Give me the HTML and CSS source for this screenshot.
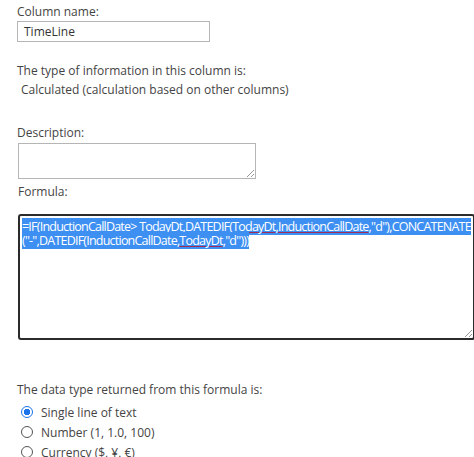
FILE: index.html
```html
<!DOCTYPE html>
<html lang="en">
<head>
  <meta charset="UTF-8">
  <title>Edit Column</title>
  <link rel="stylesheet" href="styles.css">
</head>
<body>
  <div class="form">
    <div class="label">Column name:</div>
    <div class="input">TimeLine</div>

    <div class="label type-label">The type of information in this column is:</div>
    <div class="value">Calculated (calculation based on other columns)</div>

    <div class="label desc-label">Description:</div>
    <div class="desc-box"><span class="grip"></span></div>

    <div class="label formula-label">Formula:</div>
    <div class="formula-box">
      <div class="formula-text"><span class="sel">=IF(<u>InductionCallDate</u>&gt; <u>TodayDt</u>,DATEDIF(<u>TodayDt</u>,<u>InductionCallDate</u>,"d"),CONCATENATE</span><br><span class="sel">("-",DATEDIF(InductionCallDate,<u>TodayDt</u>,"d")))</span></div>
      <span class="grip"></span>
    </div>

    <div class="label return-label">The data type returned from this formula is:</div>
    <div class="radio-list">
      <div class="radio-row"><span class="radio checked"></span>Single line of text</div>
      <div class="radio-row"><span class="radio"></span>Number (1, 1.0, 100)</div>
      <div class="radio-row"><span class="radio"></span>Currency ($, ¥, €)</div>
    </div>
  </div>
</body>
</html>
```

FILE: styles.css
```css
body {
  margin: 0;
  padding: 0;
  background-color: #fff;
  font-family: "Open Sans", "Noto Sans", sans-serif;
  font-size: 12px;
  color: #444;
  overflow: hidden;
}

.form {
  padding: 4px 0 0 17px;
}

.label {
  line-height: 16px;
}

.input {
  width: 185px;
  height: 19px;
  margin-top: 1px;
  border: 1px solid #b5b5b5;
  padding-left: 6px;
  line-height: 19px;
  color: #333;
}

.type-label {
  margin-top: 21px;
}

.value {
  margin-top: 3px;
  padding-left: 4px;
  line-height: 16px;
}

.desc-label {
  margin-top: 27px;
}

.desc-box {
  position: relative;
  width: 236px;
  height: 34px;
  margin: 2px 0 0 1px;
  border: 1px solid #b5b5b5;
}

.formula-label {
  margin-top: 5px;
  padding-left: 1px;
}

.formula-box {
  position: relative;
  width: 451px;
  height: 118px;
  margin: 14px 0 0 1px;
  border: 2px solid #2b2b2b;
  border-radius: 3px;
  padding: 4px 0 0 2px;
  box-sizing: content-box;
  overflow: hidden;
}

.formula-text {
  font-size: 12.5px;
  letter-spacing: -0.78px;
  line-height: 14px;
  color: #fff;
  white-space: nowrap;
}

.sel {
  background-color: #3d8ff2;
}

.sel u {
  text-decoration: underline solid #9b2c5c;
  text-decoration-thickness: 1px;
  text-underline-offset: 1px;
}

.grip {
  position: absolute;
  right: 1px;
  bottom: 1px;
  width: 7px;
  height: 7px;
  background: linear-gradient(135deg, transparent 45%, #999 45%, #999 52%, transparent 52%, transparent 72%, #999 72%, #999 80%, transparent 80%);
}

.return-label {
  margin-top: 42px;
}

.radio-list {
  margin-top: 4px;
  padding-left: 4px;
}

.radio-row {
  display: flex;
  align-items: center;
  gap: 8px;
  height: 20px;
}

.radio {
  width: 10px;
  height: 10px;
  border: 1px solid #555;
  border-radius: 50%;
  box-sizing: content-box;
}

.radio.checked {
  border-color: #1a73e8;
  background: radial-gradient(circle, #1a73e8 0 3px, #fff 3.5px);
}
```
